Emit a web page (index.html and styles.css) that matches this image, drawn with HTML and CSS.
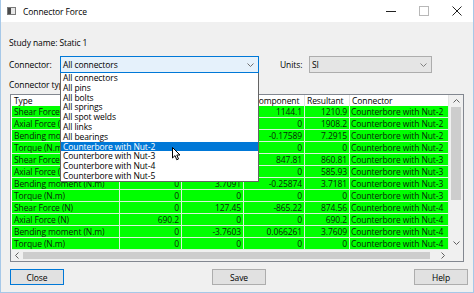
FILE: index.html
```html
<!DOCTYPE html>
<html lang="en">
<head>
  <meta charset="UTF-8" />
  <meta name="viewport" content="width=device-width, initial-scale=1.0" />
  <title>Connector Force</title>
  <link rel="stylesheet" href="styles.css">
</head>
<body>
  <div class="window">
    <div class="titlebar">
      <svg class="app-icon" width="9" height="8" viewBox="0 0 9 8">
        <rect x="0.5" y="0.5" width="8" height="7" fill="#e8e8e8" stroke="#7a7a7a"/>
        <rect x="1" y="1" width="3" height="6" fill="#4a4a4a"/>
      </svg>
      <span class="title">Connector Force</span>
      <div class="win-controls">
        <span class="win-btn">
          <svg width="10" height="10" viewBox="0 0 10 10"><line x1="0" y1="5.5" x2="10" y2="5.5" stroke="#222"/></svg>
        </span>
        <span class="win-btn">
          <svg width="10" height="10" viewBox="0 0 10 10"><rect x="0.5" y="0.5" width="9" height="9" fill="none" stroke="#b8b8b8"/></svg>
        </span>
        <span class="win-btn">
          <svg width="10" height="10" viewBox="0 0 10 10"><path d="M0.5 0.5 L9.5 9.5 M9.5 0.5 L0.5 9.5" stroke="#222"/></svg>
        </span>
      </div>
    </div>

    <div class="content">
      <p class="study">Study name: Static 1</p>

      <div class="field-row">
        <span class="field-label lbl-connector">Connector:</span>
        <div class="combo combo-connector">
          <span>All connectors</span>
          <svg width="7" height="4" viewBox="0 0 7 4"><polyline points="0.5,0.5 3.5,3.5 6.5,0.5" fill="none" stroke="#707070"/></svg>
        </div>
        <span class="field-label lbl-units">Units:</span>
        <div class="combo combo-units">
          <span>SI</span>
          <svg width="7" height="4" viewBox="0 0 7 4"><polyline points="0.5,0.5 3.5,3.5 6.5,0.5" fill="none" stroke="#808080"/></svg>
        </div>
      </div>

      <p class="type-label">Connector type:</p>

      <div class="grid-box">
        <div class="grid-main">
          <div class="grid-row head">
            <span class="hcell">Type</span>
            <span class="hcell">X-Component</span>
            <span class="hcell">Y-Component</span>
            <span class="hcell">Z-Component</span>
            <span class="hcell">Resultant</span>
            <span class="hcell">Connector</span>
          </div>
          <div class="grid-row">
            <span class="cell">Shear Force (N)</span><span class="cell num">0</span><span class="cell num">396.63</span><span class="cell num">1144.1</span><span class="cell num">1210.9</span><span class="cell conn">Counterbore with Nut-2</span>
          </div>
          <div class="grid-row">
            <span class="cell">Axial Force (N)</span><span class="cell num">1908.2</span><span class="cell num">0</span><span class="cell num">0</span><span class="cell num">1908.2</span><span class="cell conn">Counterbore with Nut-2</span>
          </div>
          <div class="grid-row">
            <span class="cell">Bending moment (N.m)</span><span class="cell num">0</span><span class="cell num">7.2894</span><span class="cell num">-0.17589</span><span class="cell num">7.2915</span><span class="cell conn">Counterbore with Nut-2</span>
          </div>
          <div class="grid-row">
            <span class="cell">Torque (N.m)</span><span class="cell num">0</span><span class="cell num">0</span><span class="cell num">0</span><span class="cell num">0</span><span class="cell conn">Counterbore with Nut-2</span>
          </div>
          <div class="grid-row">
            <span class="cell">Shear Force (N)</span><span class="cell num">0</span><span class="cell num">149.37</span><span class="cell num">847.81</span><span class="cell num">860.81</span><span class="cell conn">Counterbore with Nut-3</span>
          </div>
          <div class="grid-row">
            <span class="cell">Axial Force (N)</span><span class="cell num">585.93</span><span class="cell num">0</span><span class="cell num">0</span><span class="cell num">585.93</span><span class="cell conn">Counterbore with Nut-3</span>
          </div>
          <div class="grid-row">
            <span class="cell">Bending moment (N.m)</span><span class="cell num">0</span><span class="cell num">3.7091</span><span class="cell num">-0.25874</span><span class="cell num">3.7181</span><span class="cell conn">Counterbore with Nut-3</span>
          </div>
          <div class="grid-row">
            <span class="cell">Torque (N.m)</span><span class="cell num">0</span><span class="cell num">0</span><span class="cell num">0</span><span class="cell num">0</span><span class="cell conn">Counterbore with Nut-3</span>
          </div>
          <div class="grid-row">
            <span class="cell">Shear Force (N)</span><span class="cell num">0</span><span class="cell num">127.45</span><span class="cell num">-865.22</span><span class="cell num">874.56</span><span class="cell conn">Counterbore with Nut-4</span>
          </div>
          <div class="grid-row">
            <span class="cell">Axial Force (N)</span><span class="cell num">690.2</span><span class="cell num">0</span><span class="cell num">0</span><span class="cell num">690.2</span><span class="cell conn">Counterbore with Nut-4</span>
          </div>
          <div class="grid-row">
            <span class="cell">Bending moment (N.m)</span><span class="cell num">0</span><span class="cell num">-3.7603</span><span class="cell num">0.066261</span><span class="cell num">3.7609</span><span class="cell conn">Counterbore with Nut-4</span>
          </div>
          <div class="grid-row">
            <span class="cell">Torque (N.m)</span><span class="cell num">0</span><span class="cell num">0</span><span class="cell num">0</span><span class="cell num">0</span><span class="cell conn">Counterbore with Nut-4</span>
          </div>
        </div>

        <div class="vscroll">
          <span class="arrow-v">
            <svg width="7" height="4" viewBox="0 0 7 4"><polyline points="0.5,3.5 3.5,0.5 6.5,3.5" fill="none" stroke="#606060"/></svg>
          </span>
          <span class="vthumb"></span>
          <span class="spacer"></span>
          <span class="arrow-v arrow-down">
            <svg width="7" height="4" viewBox="0 0 7 4"><polyline points="0.5,0.5 3.5,3.5 6.5,0.5" fill="none" stroke="#606060"/></svg>
          </span>
        </div>

        <div class="hscroll">
          <span class="arrow-h">
            <svg width="4" height="7" viewBox="0 0 4 7"><polyline points="3.5,0.5 0.5,3.5 3.5,6.5" fill="none" stroke="#606060"/></svg>
          </span>
          <span class="hthumb"></span>
          <span class="spacer"></span>
          <span class="arrow-h">
            <svg width="4" height="7" viewBox="0 0 4 7"><polyline points="0.5,0.5 3.5,3.5 0.5,6.5" fill="none" stroke="#606060"/></svg>
          </span>
        </div>
        <div class="corner"></div>
      </div>

      <div class="buttons">
        <button class="btn btn-default">Close</button>
        <button class="btn">Save</button>
        <button class="btn">Help</button>
      </div>
    </div>

    <!-- open list of the Connector combo -->
    <ul class="dropdown">
      <li>All connectors</li>
      <li>All pins</li>
      <li>All bolts</li>
      <li>All springs</li>
      <li>All spot welds</li>
      <li>All links</li>
      <li>All bearings</li>
      <li class="selected">Counterbore with Nut-2</li>
      <li>Counterbore with Nut-3</li>
      <li>Counterbore with Nut-4</li>
      <li>Counterbore with Nut-5</li>
    </ul>

    <svg class="cursor" width="9" height="14" viewBox="0 0 9 14">
      <path d="M0.5 0.5 L0.5 11 L3 8.6 L4.8 12.8 L6.5 12 L4.8 8 L8 8 Z" fill="#fff" stroke="#000" stroke-linejoin="round"/>
    </svg>
  </div>
</body>
</html>
```

FILE: styles.css
```css
body {
  margin: 0;
  font-family: "Open Sans", "Noto Sans", sans-serif;
  font-size: 8.5px;
  letter-spacing: -0.1px;
  color: #000;
  background: #f0f0f0;
}

.window {
  position: relative;
  width: 474px;
  height: 293px;
  box-sizing: border-box;
  border: 1px solid #a6c8e8;
  border-top: none;
  background: #f0f0f0;
}

/* title bar */
.titlebar {
  display: flex;
  align-items: center;
  height: 22px;
  background: #fff;
}

.app-icon {
  margin-left: 6px;
}

.title {
  margin-left: 7px;
}

.win-controls {
  margin-left: auto;
  display: flex;
}

.win-btn {
  width: 33px;
  height: 22px;
  display: flex;
  align-items: center;
  justify-content: center;
}

/* form */
.content {
  padding: 0 8px;
}

.study {
  margin: 15px 0 0;
  line-height: 12px;
}

.field-row {
  display: flex;
  align-items: center;
  height: 17px;
  margin-top: 7px;
}

.field-label {
  line-height: 17px;
}

.lbl-connector {
  width: 51px;
}

.lbl-units {
  width: 29px;
  margin-left: 21px;
}

.combo {
  box-sizing: border-box;
  height: 17px;
  display: flex;
  align-items: center;
  justify-content: space-between;
  padding: 0 4px 0 2px;
  border: 1px solid #adadad;
  background: #e5e5e5;
}

.combo-connector {
  width: 199px;
  border-color: #0078d7;
  background: #e5f1fb;
}

.combo-units {
  width: 123px;
}

.type-label {
  margin: 6px 0 0;
  line-height: 12px;
}

/* result grid */
.grid-box {
  margin: 3px 0 0 1px;
  width: 454px;
  height: 168px;
  box-sizing: border-box;
  border: 1px solid #828790;
  background: #fff;
  display: grid;
  grid-template-columns: 438px 14px;
  grid-template-rows: 155px 11px;
}

.grid-main {
  padding-left: 1px;
  overflow: hidden;
}

.grid-row {
  display: grid;
  grid-template-columns: 108px 62px 62px 61px 45px 99px;
}

.hcell {
  height: 11px;
  box-sizing: border-box;
  line-height: 11px;
  padding-left: 2px;
  border-right: 1px solid #e3e3e3;
  white-space: nowrap;
  overflow: hidden;
}

.cell {
  height: 12px;
  line-height: 11px;
  box-sizing: border-box;
  padding: 0 2px;
  background: #00ff00;
  color: #0b1f0b;
  border-right: 1px solid #d8f3d8;
  border-bottom: 1px solid #d8f3d8;
  white-space: nowrap;
  overflow: hidden;
}

.num {
  text-align: right;
}

.conn {
  padding: 0 0 0 1px;
}

.vscroll {
  display: flex;
  flex-direction: column;
  align-items: center;
  background: #f0f0f0;
}

.arrow-v {
  height: 12px;
  display: flex;
  align-items: center;
}

.arrow-down {
  height: 14px;
}

.vthumb {
  width: 10px;
  height: 93px;
  background: #cdcdcd;
}

.spacer {
  flex: 1;
}

.hscroll {
  display: flex;
  align-items: center;
  background: #f0f0f0;
}

.arrow-h {
  width: 12px;
  display: flex;
  justify-content: center;
}

.hthumb {
  width: 407px;
  height: 7px;
  background: #cdcdcd;
}

.corner {
  background: #f0f0f0;
}

/* bottom buttons */
.buttons {
  display: flex;
  justify-content: space-between;
  margin: 7px -3px 0 1px;
}

.btn {
  width: 54px;
  height: 16px;
  box-sizing: border-box;
  padding: 0;
  border: 1px solid #adadad;
  background: #e1e1e1;
  font-family: inherit;
  font-size: 8.5px;
  letter-spacing: inherit;
  color: #000;
}

.btn-default {
  border-color: #0078d7;
}

/* opened combo list */
.dropdown {
  position: absolute;
  left: 59px;
  top: 73px;
  width: 199px;
  box-sizing: border-box;
  margin: 0;
  padding: 0;
  list-style: none;
  border: 1px solid #646464;
  border-top: none;
  background: #fff;
}

.dropdown li {
  height: 9.8px;
  line-height: 9.8px;
  padding-left: 2px;
  white-space: nowrap;
}

.dropdown .selected {
  background: #0078d7;
  color: #fff;
}

.cursor {
  position: absolute;
  left: 171px;
  top: 147px;
}
```
